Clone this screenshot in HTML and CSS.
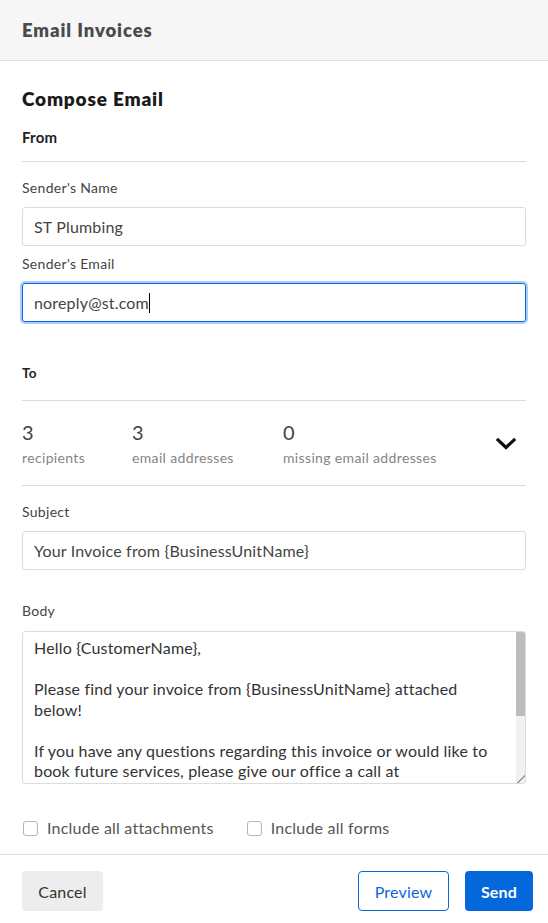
FILE: index.html
```html
<!DOCTYPE html>
<html lang="en">
<head>
<meta charset="utf-8">
<title>Email Invoices</title>
<link rel="stylesheet" href="styles.css">
</head>
<body>
<div class="modal">
  <header class="modal-header">
    <h1 class="modal-title">Email Invoices</h1>
  </header>
  <main class="modal-body">
    <h2 class="compose-title">Compose Email</h2>
    <h3 class="section-title">From</h3>
    <div class="divider from-divider"></div>

    <div class="field-label first-label">Sender's Name</div>
    <div class="field">ST Plumbing</div>

    <div class="field-label">Sender's Email</div>
    <div class="field focused">noreply@st.com<span class="caret"></span></div>

    <h3 class="section-title to-title">To</h3>
    <div class="divider to-divider"></div>

    <div class="stats">
      <div class="stat">
        <div class="stat-num">3</div>
        <div class="stat-label">recipients</div>
      </div>
      <div class="stat">
        <div class="stat-num">3</div>
        <div class="stat-label">email addresses</div>
      </div>
      <div class="stat">
        <div class="stat-num">0</div>
        <div class="stat-label">missing email addresses</div>
      </div>
      <svg class="chevron" width="20" height="12" viewBox="0 0 20 12"><path d="M2 2 L10 9.5 L18 2" fill="none" stroke="#111" stroke-width="3.2" stroke-linecap="square" stroke-linejoin="miter"/></svg>
    </div>
    <div class="divider stats-divider"></div>

    <div class="field-label subject-label">Subject</div>
    <div class="field">Your Invoice from {BusinessUnitName}</div>

    <div class="field-label body-label">Body</div>
    <div class="body-area">
      <div class="body-text">Hello {CustomerName},

Please find your invoice from {BusinessUnitName} attached
below!

If you have any questions regarding this invoice or would like to
book future services, please give our office a call at</div>
      <div class="scrollbar"><div class="thumb"></div></div>
      <span class="resize-grip"></span>
    </div>

    <div class="checks">
      <div class="check"><span class="box"></span><span>Include all attachments</span></div>
      <div class="check"><span class="box"></span><span>Include all forms</span></div>
    </div>
  </main>
  <footer class="modal-footer">
    <button class="btn btn-cancel">Cancel</button>
    <div class="footer-right">
      <button class="btn btn-outline">Preview</button>
      <button class="btn btn-primary">Send</button>
    </div>
  </footer>
</div>
</body>
</html>
```

FILE: styles.css
```css
* { box-sizing: border-box; }

html, body {
  margin: 0;
  padding: 0;
  background: #fff;
}

body {
  font-family: "Lato", "Open Sans", sans-serif;
  color: #444;
  width: 548px;
  height: 923px;
  overflow: hidden;
}

.modal {
  display: flex;
  flex-direction: column;
  height: 923px;
}

.modal-header {
  height: 61px;
  background: #f6f6f6;
  border-bottom: 1px solid #dedede;
  display: flex;
  align-items: center;
  padding: 0 22px 1px;
}

.modal-title {
  margin: 0;
  font-size: 18.5px;
  font-weight: 800;
  color: #4a4a4a;
  letter-spacing: 0.9px;
}

.modal-body {
  padding: 0 22px;
  display: flex;
  flex-direction: column;
  flex: 1;
}

.compose-title {
  margin: 26px 0 0;
  font-size: 19px;
  line-height: 24px;
  font-weight: 800;
  color: #1a1a1a;
  letter-spacing: 0.8px;
}

.section-title {
  margin: 16px 0 0;
  font-size: 15px;
  line-height: 20px;
  font-weight: 700;
  color: #222;
  letter-spacing: 0.2px;
}

.divider {
  height: 1px;
  background: #dcdcdc;
}

.from-divider { margin-top: 14px; }

.field-label {
  font-size: 14px;
  line-height: 18px;
  color: #444;
  letter-spacing: 0.3px;
  margin-top: 9px;
  margin-bottom: 10px;
}

.first-label { margin-top: 17px; }

.field {
  height: 39px;
  border: 1px solid #dcdcdc;
  border-radius: 3px;
  padding: 0 11px;
  display: flex;
  align-items: center;
  font-size: 16px;
  letter-spacing: 0.17px;
  color: #444;
}

.field.focused {
  border-color: #0a66d6;
  box-shadow: 0 0 0 2px #a9cdf7;
}

.caret {
  display: inline-block;
  width: 1px;
  height: 20px;
  background: #000;
}

.to-title {
  margin-top: 42px;
  font-size: 13.5px;
  line-height: 18px;
}

.to-divider { margin-top: 18px; }

.stats {
  display: grid;
  grid-template-columns: 110px 151px 1fr auto;
  align-items: center;
  padding: 19px 10px 0 0;
  margin-bottom: 18px;
}

.stat-num {
  font-size: 20px;
  line-height: 24px;
  color: #444;
}

.stat-label {
  margin-top: 5px;
  font-size: 14px;
  line-height: 18px;
  letter-spacing: 0.35px;
  color: #858585;
}

.chevron { display: block; }

.subject-label { margin-top: 17px; }

.body-label { margin-top: 32px; margin-bottom: 11px; }

.body-area {
  position: relative;
  height: 153px;
  border: 1px solid #dcdcdc;
  border-radius: 3px;
  overflow: hidden;
}

.body-text {
  height: 100%;
  overflow: hidden;
  padding: 6px 11px 0;
  white-space: pre;
  font-size: 16px;
  line-height: 20.5px;
  letter-spacing: 0.17px;
  color: #333;
}

.scrollbar {
  position: absolute;
  top: 0;
  right: 0;
  width: 9px;
  height: 100%;
  background: #f1f1f1;
}

.thumb {
  height: 84px;
  background: #bdbdbd;
}

.resize-grip {
  position: absolute;
  right: 0;
  bottom: 0;
  width: 9px;
  height: 9px;
  background:
    linear-gradient(135deg, transparent 55%, #999 55%, #999 65%, transparent 65%),
    #f1f1f1;
}

.checks {
  display: flex;
  gap: 33px;
  margin-top: 34px;
  padding-left: 1px;
}

.check {
  display: flex;
  align-items: center;
  font-size: 16px;
  line-height: 20px;
  letter-spacing: 0.22px;
  color: #555;
}

.box {
  flex: none;
  width: 15px;
  height: 15px;
  border: 1px solid #b5b5b5;
  border-radius: 3px;
  margin-right: 9px;
  background: #fff;
}

.modal-footer {
  flex: none;
  height: 69px;
  border-top: 1px solid #dcdcdc;
  padding: 16px 15px 0 22px;
  display: flex;
  align-items: flex-start;
  justify-content: space-between;
}

.footer-right {
  display: flex;
  gap: 16px;
}

.btn {
  height: 40px;
  border-radius: 4px;
  font-family: "Lato", "Open Sans", sans-serif;
  font-size: 16px;
  letter-spacing: 0.2px;
  padding: 0;
  cursor: pointer;
}

.btn-cancel {
  width: 81px;
  background: #ededed;
  border: none;
  color: #333;
}

.btn-outline {
  width: 91px;
  background: #fff;
  border: 1px solid #0a66d6;
  color: #0a66d6;
}

.btn-primary {
  width: 68px;
  background: #0467dc;
  border: none;
  color: #fff;
  font-weight: 700;
}
```
